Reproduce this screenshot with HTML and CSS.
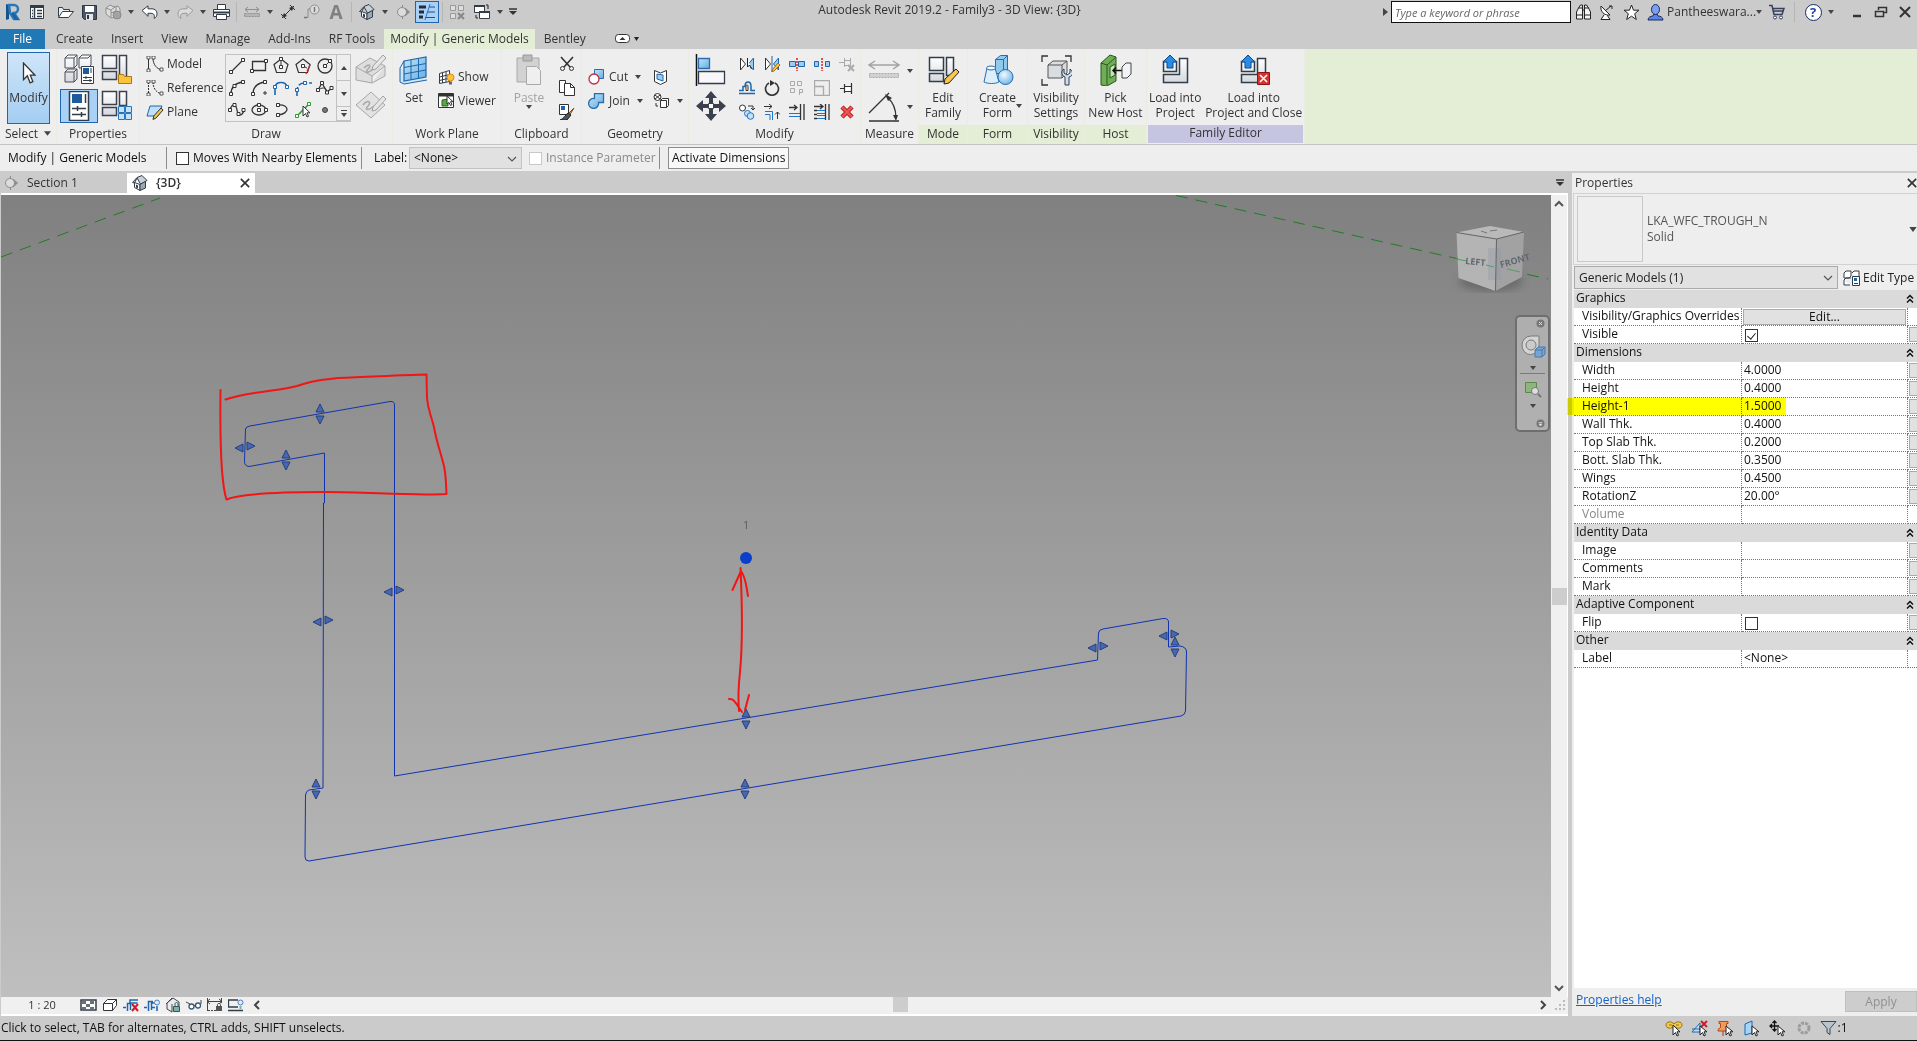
FILE: index.html
```html
<!DOCTYPE html>
<html lang="en">
<head>
    <meta charset="UTF-8">
    <meta name="viewport" content="width=device-width, initial-scale=1.0">
    <title>Autodesk Revit 2019.2 - Family3 - 3D View: {3D}</title>
    <link rel="stylesheet" href="styles.css">
</head>
<body>

    <!-- Shared symbols -->
    <svg class="defs" width="0" height="0" aria-hidden="true">
        <defs>
            <linearGradient id="gWhite" x1="0" y1="0" x2="0" y2="1"><stop offset="0" stop-color="#fff"/><stop offset="1" stop-color="#d4d8de"/></linearGradient>
            <linearGradient id="gBlue" x1="0" y1="0" x2="1" y2="1"><stop offset="0" stop-color="#c4e4f8"/><stop offset="1" stop-color="#62aee2"/></linearGradient>
            <radialGradient id="gBall" cx="0.4" cy="0.35" r="0.7"><stop offset="0" stop-color="#f2faff"/><stop offset="1" stop-color="#6cb4e4"/></radialGradient>
            <symbol id="caret" viewBox="0 0 6 4"><path d="M0 0h6L3 4z" fill="#444"/></symbol>
            <symbol id="cursor" viewBox="0 0 12 20"><path d="M1 1v15l3.500-3.500L7 19l2.500-1.200L7.200 12H11.500z" fill="#fff" stroke="#333" stroke-width="1.200"/></symbol>
            <symbol id="house" viewBox="0 0 16 16"><path d="M2.500 7.500v5L8 15.500v-6z" fill="#fff" stroke="#333d4a"/><path d="M8 15.500l5.500-2.500V6L8 9.500z" fill="#9aa7b5" stroke="#333d4a"/><path d="M.5 7.500L5 2.500l5-2 5 5L8.500 9 5 3 2.500 8z" fill="#c9d0d8" stroke="#333d4a"/><path d="M4 9.500l2 1v3l-2-1z" fill="#333d4a"/></symbol>
            <symbol id="section" viewBox="0 0 16 16"><path d="M7.500 1v14M10 4l4.500 4L10 12z" stroke="#8c8c8c" fill="#8c8c8c"/><circle cx="7" cy="8" r="4.500" fill="#dcdcdc" stroke="#8c8c8c"/></symbol>
            <symbol id="fold" viewBox="0 0 8 10"><path d="M1 4.500l3-3 3 3M1 8.500l3-3 3 3" fill="none" stroke="#111" stroke-width="1.500"/></symbol>
            <symbol id="chev" viewBox="0 0 10 6"><path d="M1 1l4 4 4-4" fill="none" stroke="#555" stroke-width="1.200"/></symbol>
            <symbol id="cross" viewBox="0 0 12 12"><path d="M1 1l10 10M11 1L1 11" stroke="#333" stroke-width="2"/></symbol>
        </defs>
    </svg>

    <!-- Title bar -->
    <header class="titlebar">
        <div class="quick-access">
            <button class="icon-btn" aria-label="Application menu"><svg width="16" height="18" viewBox="0 0 16 18"><path d="M1 1l3 1v14l-3 1z" fill="#14528a"/><path d="M4 2h5a4 4 0 0 1 0 8l4 6h-4L5 10z" fill="none" stroke="#2877b8" stroke-width="2.500"/><path d="M9 10l5 7h-4L6 10z" fill="#1b62a3"/></svg></button>
            <button class="icon-btn" aria-label="Home"><svg width="16" height="16"><path d="M1.500 1.500h13v13h-13z" fill="#fff" stroke="#333d4a"/><path d="M1 1h14v3H1z" fill="#333d4a"/><path d="M5.500 4v11M3 6.500h1M3 9.500h1M3 12.500h1M8 6.500h5M8 9.500h5M8 12.500h5" stroke="#333d4a" stroke-width="1.500"/></svg></button>
            <button class="icon-btn spaced" aria-label="Open"><svg width="17" height="14"><path d="M1.500 11.500v-9h4l1 2h6v2" fill="#e9eef3" stroke="#333d4a"/><path d="M1.500 12.500l4-6h11l-5 6z" fill="#fff" stroke="#333d4a"/></svg></button>
            <button class="icon-btn" aria-label="Save"><svg width="15" height="15"><path d="M.5.500h14v14H2.500l-2-2z" fill="#4b5566" stroke="#2d3542"/><path d="M3 1h9v6H3z" fill="#fff"/><path d="M4 9h7v6H4z" fill="#dfe5ec"/><path d="M5 10h2v4H5z" fill="#2d3542"/></svg></button>
            <button class="icon-btn" aria-label="Synchronize"><svg width="17" height="16"><path d="M1 4l4-3 4 2 4-1 2 3v5l-4 3-5 1-5-4z" fill="#dedede" stroke="#8d8d8d"/><path d="M1 4l5 2 4-3M6 6v7M6 9l5-2V3" fill="none" stroke="#8d8d8d"/><circle cx="12" cy="11" r="4" fill="#a3a3a3" stroke="#8a8a8a"/></svg></button>
            <button class="caret-btn" aria-label="Synchronize options"><svg width="6" height="4"><use href="#caret"/></svg></button>
            <button class="icon-btn" aria-label="Undo"><svg width="17" height="14"><path d="M1 5.500L7 .800v3h4c3 0 5 2 5 5 0 2-1 4-3 4.500 1-3 0-5-3-5H7v3z" fill="#fff" stroke="#333d4a"/></svg></button>
            <button class="caret-btn" aria-label="Undo list"><svg width="6" height="4"><use href="#caret"/></svg></button>
            <button class="icon-btn" aria-label="Redo"><svg width="17" height="14"><path d="M16 5.500L10 .800v3H6c-3 0-5 2-5 5 0 2 1 4 3 4.500-1-3 0-5 3-5h3v3z" fill="#dcdcdc" stroke="#999"/></svg></button>
            <button class="caret-btn" aria-label="Redo list"><svg width="6" height="4"><use href="#caret"/></svg></button>
            <button class="icon-btn" aria-label="Print"><svg width="17" height="16"><path d="M4.500 6V.500h8V6" fill="#fff" stroke="#333d4a"/><path d="M.5 5.500h16v7H.5z" fill="#fff" stroke="#333d4a"/><path d="M1 8.500h15" stroke="#333d4a" stroke-width="2"/><path d="M3.500 10.500h10v5h-10z" fill="#fff" stroke="#333d4a"/></svg></button>
            <span class="divider"></span>
            <button class="icon-btn" aria-label="Measure"><svg width="16" height="12"><path d="M1 3.500h14M4 1L1 3.500 4 6M12 1l3 2.500L12 6" fill="none" stroke="#8d8d8d"/><path d="M.5 7.500h15v3H.5z" fill="#b5b5b5" stroke="#909090" stroke-dasharray="2 1"/></svg></button>
            <button class="caret-btn" aria-label="Measure options"><svg width="6" height="4"><use href="#caret"/></svg></button>
            <button class="icon-btn" aria-label="Aligned dimension"><svg width="16" height="16"><path d="M2 14L14 2M10 1l5 5M1 10l5 5" stroke="#333" fill="none"/><path d="M14 2l-5 2 3 3zM2 14l5-2-3-3z" fill="#333"/></svg></button>
            <button class="icon-btn" aria-label="Tag by category"><svg width="16" height="16"><path d="M1 13.500h3V5h3" fill="none" stroke="#8d8d8d"/><circle cx="10.500" cy="5.500" r="4.500" fill="#dcdcdc" stroke="#8d8d8d"/><path d="M10.500 3v5M0 13.500h3" stroke="#777" stroke-width="1.500"/></svg></button>
            <button class="icon-btn text-tool" aria-label="Text">A</button>
            <span class="divider"></span>
            <button class="icon-btn" aria-label="Default 3D view"><svg width="16" height="16"><use href="#house"/></svg></button>
            <button class="caret-btn" aria-label="3D view options"><svg width="6" height="4"><use href="#caret"/></svg></button>
            <button class="icon-btn" aria-label="Section"><svg width="16" height="16"><use href="#section"/></svg></button>
            <button class="icon-btn pressed" aria-label="Thin lines"><svg width="18" height="16"><path d="M1 3h7M1 8h5M1 13h4" stroke="#222b3a" stroke-width="3"/><path d="M11 3h6M9 8h8M7 13.500h10" stroke="#2a4a80"/><path d="M12 0L7 16" stroke="#2a74c4"/></svg></button>
            <span class="divider"></span>
            <button class="icon-btn" aria-label="Close hidden windows"><svg width="16" height="16"><path d="M.5 1.500h5v5h-5zM8.500 1.500h5v5h-5zM.5 9.500h5v5h-5z" fill="#dedede" stroke="#999"/><path d="M8 9l6 6M14 9l-6 6" stroke="#888" stroke-width="2"/></svg></button>
            <button class="icon-btn" aria-label="Switch windows"><svg width="18" height="18"><path d="M1.500 2.500h10v7h-10zM6.500 8.500h10v7h-10z" fill="#fff" stroke="#333d4a"/><path d="M1 3h11M6 9h11" stroke="#333d4a" stroke-width="2"/><path d="M13 2h2v4M3 12v3h2" fill="none" stroke="#222"/></svg></button>
            <button class="caret-btn" aria-label="Window list"><svg width="6" height="4"><use href="#caret"/></svg></button>
            <button class="caret-btn customize" aria-label="Customize toolbar"><svg width="8" height="8"><path d="M0 1h8" stroke="#333" stroke-width="1.500"/><path d="M0 3h8L4 7z" fill="#333"/></svg></button>
        </div>

        <h1 class="window-title">Autodesk Revit 2019.2 - Family3 - 3D View: {3D}</h1>

        <div class="info-center">
            <button class="caret-btn" aria-label="Collapse search"><svg width="5" height="8"><path d="M0 0v8l5-4z" fill="#444"/></svg></button>
            <input class="search" type="text" placeholder="Type a keyword or phrase" aria-label="Search help">
            <button class="icon-btn" aria-label="Search"><svg width="17" height="17"><path d="M3.500 4l2-3h2v8M13.500 4l-2-3h-2v8" fill="#e8e8e8" stroke="#222"/><path d="M1.500 8l2-4h4v11h-6zM15.500 8l-2-4h-4v11h6z" fill="#f4f4f4" stroke="#222"/><path d="M7 6h3M1 11h6M10 11h6" stroke="#222"/></svg></button>
            <button class="icon-btn" aria-label="Communication center"><svg width="16" height="17"><path d="M2 2c-1 5 3 10 9 9z" fill="#fff" stroke="#222"/><path d="M6 7l6-5M10 2h3v3" stroke="#222" fill="none"/><path d="M5 11l-3 4.500h9L8 11" fill="#fff" stroke="#222"/></svg></button>
            <button class="icon-btn" aria-label="Favorites"><svg width="17" height="17"><path d="M8.500 1l2 5.200h5.500l-4.300 3.500 1.600 5.800-4.800-3.300-4.800 3.300 1.600-5.800L1 6.200h5.500z" fill="#fff" stroke="#222"/></svg></button>
            <button class="icon-btn" aria-label="Account"><svg width="17" height="17"><path d="M1 16c0-3 3-4 5-4l1-2h3l1 2c2 0 5 1 5 4z" fill="#5b84e8" stroke="#1b2c5c"/><ellipse cx="8.500" cy="5.500" rx="4" ry="5" fill="#7ca0f4" stroke="#1b2c5c"/></svg></button>
            <button class="user-btn">Pantheeswara... <svg width="6" height="4"><use href="#caret"/></svg></button>
            <button class="icon-btn" aria-label="App store"><svg width="17" height="16"><path d="M1 1.500h3l2 9h8l2-6H5M5 7h10" fill="none" stroke="#34405c" stroke-width="1.500"/><circle cx="7" cy="13.500" r="1.500" fill="#fff" stroke="#34405c"/><circle cx="13" cy="13.500" r="1.500" fill="#fff" stroke="#34405c"/></svg></button>
            <span class="divider"></span>
            <button class="icon-btn" aria-label="Help"><span class="help-mark">?</span></button>
            <button class="caret-btn" aria-label="Help options"><svg width="6" height="4"><use href="#caret"/></svg></button>
            <div class="window-buttons">
                <button class="icon-btn" aria-label="Minimize"><svg width="12" height="12"><path d="M2 10h8" stroke="#333" stroke-width="2.500"/></svg></button>
                <button class="icon-btn" aria-label="Restore"><svg width="14" height="12"><path d="M4.500 4V1.500h8v5H10M1.500 5.500h8v5h-8z" fill="none" stroke="#333" stroke-width="1.500"/></svg></button>
                <button class="icon-btn" aria-label="Close"><svg width="12" height="12"><use href="#cross"/></svg></button>
            </div>
        </div>
    </header>

    <!-- Ribbon tabs -->
    <nav class="tabs">
        <button class="tab file">File</button>
        <button class="tab">Create</button>
        <button class="tab">Insert</button>
        <button class="tab">View</button>
        <button class="tab">Manage</button>
        <button class="tab">Add-Ins</button>
        <button class="tab">RF Tools</button>
        <button class="tab active">Modify | Generic Models</button>
        <button class="tab">Bentley</button>
        <button class="tab cycle" aria-label="Minimize ribbon"><svg width="24" height="10"><rect x=".5" y=".5" width="14" height="8" rx="3" fill="#fff" stroke="#333"/><path d="M4.500 6h6l-3-3z" fill="#333"/><path d="M19 3h5l-2.500 4z" fill="#222"/></svg></button>
    </nav>

    <!-- Ribbon -->
    <section class="ribbon">
        <div class="panel w-select">
            <div class="panel-body">
                <button class="big-btn modify-btn"><svg width="14" height="22"><use href="#cursor"/></svg><span>Modify</span></button>
            </div>
            <div class="panel-title">Select <svg width="7" height="5"><use href="#caret"/></svg></div>
        </div>

        <div class="panel w-properties">
            <div class="panel-body prop-grid">
                <button class="tool" aria-label="Type properties"><svg width="32" height="32" viewBox="0 0 32 32"><g fill="url(#gWhite)" stroke="#4a4f58"><path d="M2 4l3-3h9v10l-3 3H2zM16 4l3-3h9v10l-3 3h-9zM2 18l3-3h9v10l-3 3H2z"/><path d="M2 4h9v10M11 4l3-3M16 4h9M25 4l3-3M2 18h9v10M11 18l3-3" fill="none"/></g><path d="M18.500 12.500h12v17h-12z" fill="#fff" stroke="#333d4a"/><path d="M20 14h6v6h-6z" fill="#1d5b9e"/><path d="M28 14v5M20 23.500h9M20 26.500h9M23 22v3M27 25v3" stroke="#333d4a"/></svg></button>
                <button class="tool" aria-label="Family category"><svg width="32" height="32" viewBox="0 0 32 32"><path d="M1.500 1.500h14v13h-14zM18.500 1.500h7v23h-7zM1.500 17.500h14v8h-14z" fill="url(#gWhite)" stroke="#3c424d" stroke-width="1.500"/><path d="M17.500 20.500h5l1 2h7v7h-13z" fill="#fbc33c" stroke="#b07812"/></svg></button>
                <button class="tool on" aria-label="Properties"><svg width="22" height="30" viewBox="0 0 22 30"><path d="M1.500.500h19v29h-19z" fill="#fff" stroke="#333d4a" stroke-width="1.500"/><path d="M4 3h10v9H4z" fill="#1d5b9e"/><path d="M17.500 3v9M4 17.500h14M4 23.500h14M9.500 15v5M13.500 21v5" stroke="#333d4a" stroke-width="1.500"/></svg></button>
                <button class="tool" aria-label="Family types"><svg width="32" height="32" viewBox="0 0 32 32"><path d="M1.500 1.500h14v13h-14zM18.500 1.500h7v14h-7zM1.500 17.500h14v8h-14z" fill="url(#gWhite)" stroke="#3c424d" stroke-width="1.500"/><path d="M17.500 16.500h6v6h-6zM24.500 16.500h6v6h-6zM17.500 23.500h6v6h-6zM24.500 23.500h6v6h-6z" fill="#c4e2f8" stroke="#2a74b8"/></svg></button>
            </div>
            <div class="panel-title">Properties</div>
        </div>

        <div class="panel w-draw">
            <div class="panel-body">
                <div class="tool-list">
                    <button class="row-btn"><svg width="18" height="16"><path d="M2.500 2v12M7 2c0 7 4 11 9 12" fill="none" stroke="#333"/><path d="M1 0h3v3H1zM1 13h3v3H1zM6 0h3v3H6zM14 12h3v3h-3z" fill="#fff" stroke="#333" stroke-width=".8"/></svg>Model</button>
                    <button class="row-btn"><svg width="18" height="16"><path d="M2.500 2v12M7 2c0 7 4 11 9 12" fill="none" stroke="#333" stroke-dasharray="2 1"/><path d="M1 0h3v3H1zM1 13h3v3H1zM6 0h3v3H6zM14 12h3v3h-3z" fill="#fff" stroke="#333" stroke-width=".8"/></svg>Reference</button>
                    <button class="row-btn"><svg width="18" height="16"><path d="M4 2h12l-4 10H1z" fill="#bfe0f8" stroke="#1d66ac"/><path d="M15 4l2 2-7 8-3 1.500.800-3.500z" fill="#f9c54a" stroke="#333"/></svg>Plane</button>
                </div>
                <div class="draw-box">
                    <div class="draw-grid">
                        <button class="tool" aria-label="Line"><svg width="18" height="18"><path d="M3 15L15 3" stroke="#333" stroke-width="1.300"/><path d="M1.500 13.500h3v3h-3zM13.500 1.500h3v3h-3z" fill="#fff" stroke="#333"/></svg></button>
                        <button class="tool" aria-label="Rectangle"><svg width="18" height="18"><path d="M2.500 4.500h13v9h-13z" fill="none" stroke="#333" stroke-width="1.300"/><path d="M.5 12.500h3v3h-3zM14.500 2.500h3v3h-3z" fill="#fff" stroke="#333"/></svg></button>
                        <button class="tool" aria-label="Inscribed polygon"><svg width="18" height="18"><path d="M9 2l7 5.500-2.500 8h-9L2 7.500z" fill="none" stroke="#333" stroke-width="1.200"/><path d="M9 3v6" stroke="#333"/><path d="M7.500.500h3v3h-3zM7.500 8.500h3v3h-3z" fill="#fff" stroke="#333"/></svg></button>
                        <button class="tool" aria-label="Circumscribed polygon"><svg width="18" height="18"><path d="M9 2l7 5.500-2.500 8h-9L2 7.500z" fill="none" stroke="#333" stroke-width="1.200"/><path d="M9 9l4 2" stroke="#333"/><path d="M16 8l-4 9" stroke="#d22" stroke-width="1.500" stroke-dasharray="3 1"/><path d="M7.500 7.500h3v3h-3z" fill="#fff" stroke="#333"/></svg></button>
                        <button class="tool" aria-label="Circle"><svg width="18" height="18"><circle cx="9" cy="9" r="7" fill="none" stroke="#333" stroke-width="1.300"/><path d="M9 9l5-5" stroke="#333"/><path d="M7.500 7.500h3v3h-3zM12.500 2.500h3v3h-3z" fill="#fff" stroke="#333"/></svg></button>
                        <button class="tool" aria-label="Start-end-radius arc"><svg width="18" height="18"><path d="M3 15C3 8 8 4 15 3" fill="none" stroke="#333" stroke-width="1.300"/><path d="M1.500 13.500h3v3h-3zM13.500 1.500h3v3h-3zM5 5.500h3v3H5z" fill="#fff" stroke="#333"/></svg></button>
                        <button class="tool" aria-label="Center-ends arc"><svg width="18" height="18"><path d="M3 15C3 8 8 4 15 3" fill="none" stroke="#333" stroke-width="1.300"/><path d="M1.500 13.500h3v3h-3zM13.500 1.500h3v3h-3z" fill="#fff" stroke="#333"/><path d="M13 14h4M15 12v4" stroke="#333"/></svg></button>
                        <button class="tool" aria-label="Tangent arc"><svg width="18" height="18"><path d="M3 16V8c1-6 11-6 12 0" fill="none" stroke="#1c66b4" stroke-width="1.600"/><path d="M1.500 6.500h3v3h-3zM13.500 6.500h3v3h-3z" fill="#fff" stroke="#1c66b4"/></svg></button>
                        <button class="tool" aria-label="Fillet arc"><svg width="18" height="18"><path d="M3 17v-5c0-5 3-8 7-8h8" fill="none" stroke="#1c66b4" stroke-width="1.600" stroke-dasharray="9 2"/><path d="M1.500 9.500h3v3h-3zM9.500 2.500h3v3h-3z" fill="#fff" stroke="#1c66b4"/></svg></button>
                        <button class="tool" aria-label="Spline"><svg width="18" height="18"><path d="M2 11L6 4l5 9 5-4" fill="none" stroke="#333" stroke-width="1.300"/><path d="M2 11c3-2 8-4 9 2" fill="none" stroke="#333"/><path d="M.5 9.500h3v3h-3zM4.500 2.500h3v3h-3zM9.500 12h3v3h-3zM14 7.500h3v3h-3z" fill="#fff" stroke="#333"/></svg></button>
                        <button class="tool" aria-label="Spline through points"><svg width="18" height="18"><path d="M2 9c2-7 6-6 7 0s5 7 7 0" fill="none" stroke="#333" stroke-width="1.300"/><path d="M.5 7.500h3v3h-3zM5 2.500h3v3H5zM9 11.500h3v3H9zM14 7.500h3v3h-3z" fill="#fff" stroke="#333"/></svg></button>
                        <button class="tool" aria-label="Ellipse"><svg width="18" height="18"><ellipse cx="9" cy="9" rx="7" ry="5" fill="none" stroke="#333" stroke-width="1.300"/><path d="M7.500 7.500h3v3h-3zM14.500 7.500h3v3h-3zM7.500 2.500h3v3h-3z" fill="#fff" stroke="#333"/></svg></button>
                        <button class="tool" aria-label="Partial ellipse"><svg width="18" height="18"><path d="M6 4c12-1 12 9 0 10" fill="none" stroke="#333" stroke-width="1.300"/><path d="M4.500 2.500h3v3h-3zM4.500 12.500h3v3h-3z" fill="#fff" stroke="#333"/></svg></button>
                        <button class="tool" aria-label="Pick lines"><svg width="18" height="18"><path d="M3 15L15 3" stroke="#2f9a2f" stroke-width="1.600"/><path d="M1.500 13.500h3v3h-3zM13.500 1.500h3v3h-3z" fill="#fff" stroke="#2f9a2f"/><path d="M9 5v10l2.500-2.500L13 16l1.500-.700-1.500-3.500h3z" fill="#fff" stroke="#333"/></svg></button>
                        <button class="tool" aria-label="Point"><svg width="18" height="18"><circle cx="9" cy="9" r="2.500" fill="#777" stroke="#444"/></svg></button>
                    </div>
                    <div class="draw-scroll">
                        <button aria-label="Scroll up"><svg width="6" height="4"><path d="M0 4h6L3 0z" fill="#444"/></svg></button>
                        <button aria-label="Scroll down"><svg width="6" height="4"><use href="#caret"/></svg></button>
                        <button class="more" aria-label="More"><svg width="6" height="7"><path d="M0 .500h6" stroke="#444"/><path d="M0 3h6L3 7z" fill="#444"/></svg></button>
                    </div>
                </div>
                <div class="surface-tools">
                    <button class="tool" aria-label="Draw on face"><svg width="32" height="32" viewBox="0 0 32 32"><path d="M1 14L15 5l15 8-13 10zM1 14v13l16 3V23M30 13v10L17 30" fill="#dedede" stroke="#a8a8a8"/><path d="M9 15c5-5 8-3 4 1s0 5 6-1" fill="none" stroke="#a8a8a8" stroke-width="1.500"/><path d="M28 2l3 3-10 11-4 1 1-4z" fill="#e6e6e6" stroke="#a0a0a0"/></svg></button>
                    <button class="tool" aria-label="Draw on work plane"><svg width="32" height="32" viewBox="0 0 32 32"><path d="M1 16L16 3l14 13-14 13z" fill="#e2e2e2" stroke="#a8a8a8"/><path d="M8 16c5-6 9-3 5 1s0 5 6 0" fill="none" stroke="#a8a8a8" stroke-width="1.500"/><path d="M28 7l3 3-10 11-4 1 1-4z" fill="#e6e6e6" stroke="#a0a0a0"/></svg></button>
                </div>
            </div>
            <div class="panel-title">Draw</div>
        </div>

        <div class="panel w-workplane">
            <div class="panel-body">
                <button class="big-btn narrow"><svg width="32" height="32" viewBox="0 0 32 32"><path d="M2 14v14l4 2 23-4" fill="#cfe6f6" stroke="#1d66ac"/><path d="M6 7l22-4v20L6 27z" fill="url(#gBlue)" stroke="#1d66ac" stroke-width="1.200"/><path d="M13 6v20M20.500 5v20M6 13.500l22-4M6 20l22-4M2 14l4-7" fill="none" stroke="#1d66ac"/></svg><span>Set</span></button>
                <div class="tool-list middle">
                    <button class="row-btn"><svg width="17" height="16"><path d="M1.500 4.500l10-3v11l-10 2zM4.500 4v10M8 3v10M1.500 8l10-2.500M1.500 11.500l10-2.500" fill="#fff" stroke="#333d4a"/><circle cx="12.500" cy="8.500" r="3.500" fill="#ffc23a" stroke="#d88a12"/><path d="M11 12.500h3v3h-3z" fill="#666"/></svg>Show</button>
                    <button class="row-btn"><svg width="17" height="16"><path d="M.5.500h15v14H.5z" fill="#fff" stroke="#333"/><path d="M1 2h14" stroke="#333" stroke-width="3"/><path d="M4 7l6-1v7H4z" fill="#5aa845" stroke="#28671c"/><path d="M9 3v8l2-1.500 1.500 3 1.500-.800-1.500-3H15z" fill="#fff" stroke="#333"/></svg>Viewer</button>
                </div>
            </div>
            <div class="panel-title">Work Plane</div>
        </div>

        <div class="panel w-clipboard">
            <div class="panel-body">
                <button class="big-btn narrow disabled"><svg width="28" height="32" viewBox="0 0 28 32"><path d="M2 4h22v24H2z" fill="#d2d2d2" stroke="#aaa"/><path d="M8 1h9v6H8z" fill="#bbb" stroke="#999"/><path d="M11.500 12.500h10l4 4v14h-14z" fill="#efefef" stroke="#aaa"/></svg><span>Paste</span><svg width="6" height="4"><use href="#caret"/></svg></button>
                <div class="tool-list">
                    <button class="tool" aria-label="Cut"><svg width="16" height="16"><path d="M2 1l9 10M14 1L5 11" stroke="#333" stroke-width="1.600"/><circle cx="3.500" cy="12.500" r="2" fill="none" stroke="#333"/><circle cx="12.500" cy="12.500" r="2" fill="none" stroke="#333"/></svg></button>
                    <button class="tool" aria-label="Copy"><svg width="16" height="16"><path d="M.5.500h6v12h-6z" fill="#fff" stroke="#333"/><path d="M5.500 3.500h6l4 4v8h-10z" fill="#fff" stroke="#333"/><path d="M11.500 3.500v4h4" fill="none" stroke="#333"/></svg></button>
                    <button class="tool" aria-label="Match type"><svg width="16" height="16"><path d="M.5.500h9v10h-9z" fill="#fff" stroke="#333"/><path d="M2 2h4v4H2z" fill="#1d66ac"/><path d="M15 4l-6 6 1 2z" fill="#e8b060" stroke="#7a4a12"/><path d="M9 9l3 2-4 5H1c4-1 5-5 8-7z" fill="#4a5566" stroke="#222"/></svg></button>
                </div>
            </div>
            <div class="panel-title">Clipboard</div>
        </div>

        <div class="panel w-geometry">
            <div class="panel-body">
                <div class="tool-list middle">
                    <button class="row-btn"><svg width="18" height="16"><path d="M6.500.500h9v9h-9z" fill="url(#gBlue)" stroke="#2a6cad"/><circle cx="6" cy="10" r="5" fill="#fff" stroke="#c22c42" stroke-width="1.300"/></svg>Cut <svg class="more-caret" width="6" height="4"><use href="#caret"/></svg></button>
                    <button class="row-btn"><svg width="18" height="16"><path d="M6.500.500h9v9h-5a5 5 0 1 1-4-4z" fill="url(#gBlue)" stroke="#2a6cad" stroke-width="1.300"/></svg>Join <svg class="more-caret" width="6" height="4"><use href="#caret"/></svg></button>
                </div>
                <div class="tool-list middle">
                    <button class="tool" aria-label="Split face"><svg width="16" height="16"><path d="M1.500 1.500l6 2.500 6-2.500v11l-6 3-6-3z" fill="#fff" stroke="#333"/><path d="M4 5l6 1v6l-6-2z" fill="#9ccdf0" stroke="#1d66ac"/></svg></button>
                    <button class="tool pair" aria-label="Paint"><svg width="17" height="16"><circle cx="4.500" cy="4" r="3.500" fill="#fff" stroke="#333"/><path d="M2 2l5 4M7 2L2 6M3 10v3h2" stroke="#333" fill="none"/><path d="M7.500 7.500l2-2h6v7l-2 2h-6zM7.500 7.500h6v7" fill="#fff" stroke="#333"/></svg><svg width="6" height="4"><use href="#caret"/></svg></button>
                </div>
            </div>
            <div class="panel-title">Geometry</div>
        </div>

        <div class="panel w-modify">
            <div class="panel-body">
                <div class="tool-stack">
                    <button class="tool" aria-label="Align"><svg width="32" height="32" viewBox="0 0 32 32"><path d="M1.500 0v32" stroke="#111" stroke-width="1.500"/><path d="M3.500 4.500h11v10h-11z" fill="url(#gBlue)" stroke="#2a6cad" stroke-width="1.300"/><path d="M3.500 17.500h26v12h-26z" fill="#f8f8fa" stroke="#333d4a" stroke-width="1.300"/></svg></button>
                    <button class="tool" aria-label="Move"><svg width="32" height="32" viewBox="0 0 32 32"><path d="M16 1l6 7h-4v5h-4V8h-4zM16 31l6-7h-4v-5h-4v5h-4zM1 16l7-6v4h5v4H8v4zM31 16l-7-6v4h-5v4h5v4z" fill="#3a404c"/><path d="M13.500 13.500h5v5h-5z" fill="#fff" stroke="#3a404c"/></svg></button>
                </div>
                <div class="modify-grid">
                    <button class="tool" aria-label="Mirror pick axis"><svg width="16" height="16"><path d="M1.500 2v12l5-6z" fill="#fff" stroke="#333"/><path d="M14.500 2v12l-5-6z" fill="#9ccdf0" stroke="#1d66ac"/><path d="M8.500 2v9l2-2 2 4" stroke="#222" fill="#fff"/></svg></button>
                    <button class="tool" aria-label="Mirror draw axis"><svg width="16" height="16"><path d="M1.500 2v12l5-6z" fill="#fff" stroke="#333"/><path d="M14.500 2v12l-5-6z" fill="#9ccdf0" stroke="#1d66ac"/><path d="M8 0v16" stroke="#1d66ac"/><path d="M14 7l2 2-6 6-2 .500.500-2z" fill="#f9c54a" stroke="#a06a12"/></svg></button>
                    <button class="tool" aria-label="Split"><svg width="16" height="16"><path d="M.5 5.500h6v5h-6zM9.500 5.500h6v5h-6z" fill="#9ccdf0" stroke="#1d66ac"/><path d="M8 2v13" stroke="#d22" stroke-width="1.500" stroke-dasharray="2 1"/></svg></button>
                    <button class="tool" aria-label="Split with gap"><svg width="16" height="16"><path d="M.5 5.500h4v5h-4zM11.500 5.500h4v5h-4z" fill="#9ccdf0" stroke="#1d66ac"/><path d="M8 2v13" stroke="#d22" stroke-width="1.500" stroke-dasharray="2 1"/></svg></button>
                    <button class="tool" aria-label="Unpin"><svg width="16" height="16"><path d="M0 6.500h5M5.500 2v9M5.500 4.500h6v5h-6M11.500 2v9" fill="none" stroke="#aaa"/><path d="M9 9l6 6M15 9l-6 6" stroke="#aaa" stroke-width="2"/></svg></button>
                    <button class="tool" aria-label="Offset"><svg width="16" height="16"><path d="M0 13.500h16M0 10.500h4v-4h2c0-6 6-6 6 0v4h4" fill="none" stroke="#1d66ac" stroke-width="1.500"/><path d="M7 10.500V7c0-3 2-3 2 0v3.500z" fill="#fff" stroke="#333"/></svg></button>
                    <button class="tool" aria-label="Rotate"><svg width="16" height="16"><path d="M5 3a6.500 6.500 0 1 0 6 0" fill="none" stroke="#333" stroke-width="1.600"/><path d="M6 0l5 3-5 3z" fill="#333"/></svg></button>
                    <button class="tool" aria-label="Array"><svg width="16" height="16"><path d="M1.500 1.500h4v4h-4zM8.500 1.500h4v4h-4zM1.500 8.500h4v4h-4zM10.500 15V9.500h3v3h-3" fill="none" stroke="#aaa"/></svg></button>
                    <button class="tool" aria-label="Scale"><svg width="16" height="16"><path d="M.5.500h15v15H.5zM.5 6.500h9v9" fill="none" stroke="#aaa" stroke-width="1.300"/></svg></button>
                    <button class="tool" aria-label="Pin"><svg width="16" height="16"><path d="M1 8.500h4M5.500 4v9M5.500 6.500h7v5h-7M12.500 3v11" fill="#fff" stroke="#333" stroke-width="1.200"/></svg></button>
                    <button class="tool" aria-label="Copy element"><svg width="16" height="16"><circle cx="3.500" cy="4" r="3" fill="#fff" stroke="#333"/><path d="M9 2h5v4M12 4l2 2 2-2" fill="none" stroke="#333"/><circle cx="8.500" cy="9.500" r="3" fill="#c4e2f8" stroke="#1d76c8"/><circle cx="11.500" cy="12" r="3.300" fill="#c4e2f8" stroke="#1d76c8"/></svg></button>
                    <button class="tool" aria-label="Trim corner"><svg width="16" height="16"><path d="M0 2.500h8M5 0l3 2.500L5 5M13.500 15V8M11 10.500L13.500 8l2.500 2.500" fill="none" stroke="#333"/><path d="M1 7.500h7.500V16M1 10.500h5V16" fill="none" stroke="#1d76c8"/></svg></button>
                    <button class="tool" aria-label="Trim single"><svg width="16" height="16"><path d="M0 3.500h8M5 1l3 2.500L5 6M11.500 0v16M15 0v16" fill="none" stroke="#333" stroke-width="1.300"/><path d="M0 9.500h11M0 12.500h11" stroke="#1d76c8"/></svg></button>
                    <button class="tool" aria-label="Trim multiple"><svg width="16" height="16"><path d="M0 2.500h9M6 0l3 2.500L6 5M11.500 0v16M15 0v16M0 6.500h3M0 10.500h3M0 14.500h3" fill="none" stroke="#333" stroke-width="1.300"/><path d="M3 6.500h8M3 9.500h8M3 11.500h8M3 14.500h8" stroke="#1d76c8"/></svg></button>
                    <button class="tool" aria-label="Delete"><svg width="16" height="16"><path d="M3 3l10 10M13 3L3 13" stroke="#a81c1c" stroke-width="4.500"/><path d="M3 3l10 10M13 3L3 13" stroke="#f05050" stroke-width="2.500"/></svg></button>
                </div>
            </div>
            <div class="panel-title">Modify</div>
        </div>

        <div class="panel w-measure">
            <div class="panel-body tool-stack">
                <button class="tool pair" aria-label="Measure between references"><svg width="32" height="32" viewBox="0 0 32 32"><path d="M1 10h30M7 6l-6 4 6 4M25 6l6 4-6 4" fill="none" stroke="#a3a3a3" stroke-width="1.500"/><path d="M1.500 18.500h29v4h-29z" fill="#d0d0d0" stroke="#aaa" stroke-dasharray="2 1"/></svg><svg width="6" height="4"><use href="#caret"/></svg></button>
                <button class="tool pair" aria-label="Angular dimension"><svg width="32" height="32" viewBox="0 0 32 32"><path d="M1 22L21 2M1 30h30" stroke="#333" stroke-width="1.300"/><path d="M19 6c6 5 9 12 9 21" fill="none" stroke="#333" stroke-width="1.300"/><path d="M17 3l7 4-4 3zM25 24h5l-2 6z" fill="#333"/></svg><svg width="6" height="4"><use href="#caret"/></svg></button>
            </div>
            <div class="panel-title">Measure</div>
        </div>

        <div class="panel context w-mode">
            <div class="panel-body">
                <button class="big-btn"><svg width="32" height="32" viewBox="0 0 32 32"><path d="M2.500 3.500h14v13h-14zM19.500 3.500h7v18h-7zM2.500 19.500h14v8h-14z" fill="url(#gWhite)" stroke="#333d4a" stroke-width="1.500"/><path d="M29 15l3 3-10 11-5 1 1-5z" fill="#f9c54a" stroke="#222"/></svg><span>Edit<br>Family</span></button>
            </div>
            <div class="panel-title">Mode</div>
        </div>

        <div class="panel context w-form">
            <div class="panel-body">
                <button class="big-btn"><svg width="32" height="32" viewBox="0 0 32 32"><path d="M13.500 5.500l5-4h7v15l-4 3h-8zM13.500 5.500h8v13M21.500 5.500l4-4" fill="#8fc9ee" stroke="#2a6cad"/><path d="M5 14h8l4 14c-4 2-11 2-15 0z" fill="#dceefa" stroke="#2a6cad"/><ellipse cx="9" cy="14" rx="4.500" ry="2" fill="#f5fbff" stroke="#2a6cad"/><circle cx="23.500" cy="23" r="7.500" fill="url(#gBall)" stroke="#2a6cad"/></svg><span>Create<br>Form</span><svg class="corner" width="6" height="4"><use href="#caret"/></svg></button>
            </div>
            <div class="panel-title">Form</div>
        </div>

        <div class="panel context w-visibility">
            <div class="panel-body">
                <button class="big-btn"><svg width="32" height="32" viewBox="0 0 32 32"><path d="M2 8V2h6M25 2h6v6M2 25v6h6" fill="none" stroke="#333" stroke-width="1.300"/><path d="M8 11l5-4h14v12l-5 5H8zM8 11h14v13M22 11l5-4" fill="#d9dce1" stroke="#555"/><path d="M24 15v4l3 2 3-2v-4c4 3 3 7-1 8v8h-4v-8c-4-2-4-6-1-8z" fill="#cfe0f2" stroke="#333d4a"/></svg><span>Visibility<br>Settings</span></button>
            </div>
            <div class="panel-title">Visibility</div>
        </div>

        <div class="panel context w-host">
            <div class="panel-body">
                <button class="big-btn"><svg width="32" height="32" viewBox="0 0 32 32"><path d="M1 9l9-8 6 2v24l-9 5-6-1z" fill="#6fae57" stroke="#28591b"/><path d="M7 11v20M7 11l9-8M1 9l6 2" stroke="#28591b" fill="none"/><path d="M10 13l5-3v11l-5 3z" fill="#c9e4bd" stroke="#28591b"/><path d="M13 16.500h9M16 13.500l-3 3 3 3" stroke="#111" stroke-width="1.500" fill="none"/><path d="M22 13l4-4h5v11l-4 4h-5z" fill="#f1f3f6" stroke="#444"/></svg><span>Pick<br>New Host</span></button>
            </div>
            <div class="panel-title">Host</div>
        </div>

        <div class="panel family w-family">
            <div class="panel-body">
                <button class="big-btn"><svg width="32" height="32" viewBox="0 0 32 32"><path d="M4.500 7.500h13v10h-13zM20.500 4.500h8v24h-24v-8h16z" fill="url(#gWhite)" stroke="#333d4a" stroke-width="1.500"/><path d="M11 1l7 7h-4v6H8V8H4z" fill="#2b8ce6" stroke="#0d4a8c"/></svg><span>Load into<br>Project</span></button>
                <button class="big-btn"><svg width="32" height="32" viewBox="0 0 32 32"><path d="M3.500 7.500h13v10h-13zM19.500 4.500h8v24h-24v-8h16z" fill="url(#gWhite)" stroke="#333d4a" stroke-width="1.500"/><path d="M10 1l7 7h-4v6H7V8H3z" fill="#2b8ce6" stroke="#0d4a8c"/><path d="M19.500 18.500h12v12h-12z" fill="#d9322e" stroke="#8c1414"/><path d="M22 21l7 7M29 21l-7 7" stroke="#fff" stroke-width="1.500"/></svg><span>Load into<br>Project and Close</span></button>
            </div>
            <div class="panel-title">Family Editor</div>
        </div>
    </section>

    <!-- Options bar -->
    <section class="options-bar">
        <span class="mode-name">Modify | Generic Models</span>
        <span class="bar"></span>
        <label class="check"><input type="checkbox">Moves With Nearby Elements</label>
        <span class="bar"></span>
        <label class="label-field" for="labelSelect">Label:</label>
        <div class="select-wrap label-select">
            <select id="labelSelect"><option>&lt;None&gt;</option></select>
            <svg width="10" height="6"><use href="#chev"/></svg>
        </div>
        <label class="check off"><input type="checkbox" disabled>Instance Parameter</label>
        <span class="bar"></span>
        <button class="activate">Activate Dimensions</button>
    </section>

    <main class="workspace">
        <!-- Drawing area -->
        <section class="view">
            <div class="view-tabs">
                <button class="view-tab"><svg width="16" height="16"><use href="#section"/></svg>Section 1</button>
                <div class="view-tab current"><svg width="16" height="16"><use href="#house"/></svg><b>{3D}</b><button class="close-tab" aria-label="Close view"><svg width="10" height="10" viewBox="0 0 12 12"><use href="#cross"/></svg></button></div>
                <button class="view-menu" aria-label="View list"><svg width="8" height="8"><path d="M0 1h8" stroke="#333" stroke-width="1.500"/><path d="M0 3h8L4 7z" fill="#333"/></svg></button>
            </div>

            <div class="view-row">
                <div class="canvas">
                    <svg class="model" viewBox="1 195 1550 802" preserveAspectRatio="xMinYMin meet">
                        <defs>
                            <path id="gripV" d="M0-10l4 8h-8zM0 10l4-8h-8z"/>
                            <path id="gripH" d="M-10 1l8-4v8zM10-1l-8-4v8z"/>
                            <filter id="soft"><feGaussianBlur stdDeviation="4"/></filter>
                        </defs>

                        <!-- Reference planes -->
                        <g class="ref-plane">
                            <path d="M1 257L160 198"/>
                            <path d="M1176 195.500L1548 279"/>
                        </g>

                        <!-- Profile sketch -->
                        <path class="profile" d="M324.500 453L249 466.500Q244.500 466 244.500 461.500L245.500 429Q246 426.500 250 426L390 401.500Q394.500 401 394.500 405V776L1097.500 660L1098.500 633Q1099 629.500 1103 629L1163 618.500Q1168.500 618 1168.500 622V647L1180 646Q1186.500 647 1186.500 652L1185.500 711Q1185 715 1181 716L309 861Q305 861 305 857L305.500 795Q306 791 309 790L323 788L323.500 503H324.500Z"/>
                        <g class="grips">
                            <use href="#gripV" x="320" y="414"/><use href="#gripV" x="286" y="460"/>
                            <use href="#gripV" x="746" y="719"/><use href="#gripV" x="745" y="789"/>
                            <use href="#gripV" x="1175" y="647"/><use href="#gripV" x="316" y="789"/>
                            <use href="#gripH" x="245" y="447"/><use href="#gripH" x="394" y="591"/>
                            <use href="#gripH" x="323" y="621"/><use href="#gripH" x="1098" y="647"/>
                            <use href="#gripH" x="1169" y="635"/>
                        </g>
                        <circle cx="746" cy="558" r="6" fill="#0a3ecb"/>
                        <text class="point-label" x="746" y="529">1</text>

                        <!-- Hand markup -->
                        <g class="markup">
                            <path d="M220.500 390C220 430 220 480 226.500 499.500C240 494 280 492 325 492C370 492 410 496 446.500 494C446 485 446 475 444 466C440 450 436 440 434 427C430 412 428 410 427 398L426.500 374.500C400 375 370 377 338 378C310 381 306 383 297 386C280 391 250 391 225.500 399.500"/>
                            <path d="M740.500 568C742 600 743 640 740 672C738 690 738 700 739 711M732.500 590L741 571C746 578 746 585 748 596M729 699C734 698 736 704 742 712M749 695L745 710"/>
                        </g>

                        <!-- View cube -->
                        <ellipse cx="1491" cy="281" rx="32" ry="10" fill="#444" opacity=".45" filter="url(#soft)"/>
                        <path d="M1456.500 232.500L1496.500 239L1495.500 291L1458.500 278Z" fill="#b4b4b4"/>
                        <path d="M1496.500 239L1524 232L1522 277L1495.500 291Z" fill="#a2a2a2"/>
                        <path d="M1456.500 232.500L1490 226L1524 232L1496.500 239Z" fill="#b9b9b9"/>
                        <path d="M1488 248h13v32h-13z" fill="#8f9aa6" opacity=".35"/>
                        <path d="M1456.500 232.500L1496.500 239L1524 232M1496.500 239L1495.500 291" fill="none" stroke="#666"/>
                        <path d="M1481 231l6 2M1490 231l7-1" stroke="#777"/>
                        <path d="M1456 259L1467 261M1486 265L1494 267M1507 269L1520 272" stroke="#4fa05c"/>
                        <text class="cube-label" x="1465" y="264" transform="rotate(6 1465 264)">LEFT</text>
                        <text class="cube-label" x="1501" y="268" transform="rotate(-16 1501 268)">FRONT</text>
                    </svg>

                    <div class="nav-bar">
                        <button class="nav-dot" aria-label="Close navigation bar"><svg width="9" height="9"><circle cx="4.500" cy="4.500" r="4" fill="#777"/><path d="M3 3l3 3M6 3L3 6" stroke="#ddd"/></svg></button>
                        <button class="nav-tool" aria-label="Steering wheel"><svg width="26" height="26"><path d="M2 11a9 9 0 0 1 9-9h8v9a8 9 0 0 1-17 0z" fill="#d4d4d4" stroke="#7a7a7a"/><circle cx="11" cy="11" r="5" fill="#cacaca" stroke="#7a7a7a"/><path d="M15 16l3-3h7v7l-3 3h-7zM15 16h7v7M22 16l3-3" fill="#78a4d2" stroke="#4a78a8"/></svg><svg width="6" height="4"><use href="#caret"/></svg></button>
                        <span class="nav-line"></span>
                        <button class="nav-tool" aria-label="Zoom region"><svg width="18" height="18"><path d="M1.500 2.500h11v10h-11z" fill="#8fb57e" stroke="#5a8a4a"/><circle cx="11" cy="11" r="3.500" fill="#ddd" stroke="#777"/><path d="M14 14l3 3" stroke="#777" stroke-width="2"/></svg><svg width="6" height="4"><use href="#caret"/></svg></button>
                        <button class="nav-dot last" aria-label="Navigation options"><svg width="9" height="9"><circle cx="4.500" cy="4.500" r="4" fill="#777"/><path d="M2.500 3.500h4M3 5h3L4.500 7z" stroke="#ddd" fill="#ddd" stroke-width=".7"/></svg></button>
                    </div>
                </div>
                <div class="scroll-v">
                    <button aria-label="Scroll up"><svg width="10" height="7"><path d="M1 6l4-4 4 4" fill="none" stroke="#555" stroke-width="2"/></svg></button>
                    <span class="thumb"></span>
                    <button aria-label="Scroll down"><svg width="10" height="7"><path d="M1 1l4 4 4-4" fill="none" stroke="#555" stroke-width="2"/></svg></button>
                </div>
            </div>

            <div class="view-bar">
                <button class="scale">1 : 20</button>
                <button aria-label="Detail level"><svg width="17" height="14"><path d="M1 2h15v10H1z" fill="#fff" stroke="#333d4a" stroke-width="1.500"/><path d="M2 3h4v3H2zM10 3h4v3h-4zM6 6h4v3H6zM2 9h4v2H2zM10 9h4v2h-4z" fill="#6a7078"/></svg></button>
                <button aria-label="Visual style"><svg width="16" height="14"><path d="M1.500 5.500l4-4h9v6l-4 5h-9zM1.500 5.500h9v7M10.500 5.500l4-4" fill="#fff" stroke="#333"/></svg></button>
                <button aria-label="Crop view"><svg width="16" height="14"><path d="M0 9.500h3M4.500 13V5.500H7V2h8M7.500 12V5h7" fill="none" stroke="#1d66ac" stroke-width="1.500"/><path d="M9 6l6 7M15 6l-6 7" stroke="#c8202c" stroke-width="2"/></svg></button>
                <button aria-label="Show crop region"><svg width="16" height="14"><path d="M0 9.500h3M4.500 13V3.500H9M7.500 12V5h3M7 9.500h4" fill="none" stroke="#1d66ac" stroke-width="1.500"/><circle cx="13" cy="4.500" r="2.500" fill="#dcecfa" stroke="#4a80c0"/><path d="M12 8h2v5h-2z" fill="#4a80c0"/></svg></button>
                <button aria-label="Lock 3D view"><svg width="16" height="16" viewBox="0 0 16 16"><path d="M2 6l6-5 6 4v4M2 6v6l5 3V7M1 7l6-6" fill="#e8eaee" stroke="#444"/><path d="M8.500 9.500h6v5h-6z" fill="#7fb0a8" stroke="#2c5a54"/><path d="M10 9V7c0-2 3-2 3 0v2" fill="none" stroke="#2c5a54"/></svg></button>
                <button aria-label="Temporary hide"><svg width="16" height="12"><path d="M0 3l4 2M15 1v4" stroke="#444"/><circle cx="5.500" cy="7.500" r="2.500" fill="#fff" stroke="#3a5a74" stroke-width="1.300"/><circle cx="12" cy="6.500" r="2.500" fill="#fff" stroke="#3a5a74" stroke-width="1.300"/><path d="M8 7l2-1" stroke="#444"/></svg></button>
                <button aria-label="Reveal constraints"><svg width="17" height="14"><path d="M1.500 0v13M15.500 0v5M1 3.500h15M4 1L1 3.500 4 6M13 1l3 2.500L13 6" fill="none" stroke="#444"/><path d="M2 12.500h8" stroke="#444" stroke-dasharray="2 1"/><path d="M10 8h6v5h-6z" fill="#555"/><path d="M11.500 8V6.500c0-1.500 3-1.500 3 0V8" fill="none" stroke="#555"/></svg></button>
                <button aria-label="Preview visibility"><svg width="16" height="14"><path d="M10 2H.500v7H10M0 12.500h15" fill="none" stroke="#333d4a" stroke-width="1.300"/><circle cx="12.500" cy="4.500" r="2.500" fill="#dcecfa" stroke="#4a80c0"/><path d="M11.500 8h2v3h-2z" fill="#8aa"/></svg></button>
                <button aria-label="Scroll left"><svg width="7" height="10"><path d="M6 1L2 5l4 4" fill="none" stroke="#444" stroke-width="2"/></svg></button>
                <div class="scroll-h"><span class="thumb"></span></div>
                <button aria-label="Scroll right"><svg width="7" height="10"><path d="M1 1l4 4-4 4" fill="none" stroke="#444" stroke-width="2"/></svg></button>
                <svg class="grip" width="12" height="12"><path d="M8 1h2v2H8zM4 5h2v2H4zM8 5h2v2H8zM0 9h2v2H0zM4 9h2v2H4zM8 9h2v2H8z" fill="#bbb"/></svg>
            </div>
        </section>

        <!-- Properties palette -->
        <aside class="properties">
            <div class="palette-head"><h2>Properties</h2><button aria-label="Close palette"><svg width="10" height="10" viewBox="0 0 12 12"><use href="#cross"/></svg></button></div>
            <button class="type-selector">
                <span class="preview"></span>
                <span class="type-name">LKA_WFC_TROUGH_N<br>Solid</span>
                <svg width="8" height="5" viewBox="0 0 6 4"><use href="#caret"/></svg>
            </button>
            <div class="filter-row">
                <div class="select-wrap filter-select">
                    <select aria-label="Element filter"><option>Generic Models (1)</option></select>
                    <svg width="10" height="6"><use href="#chev"/></svg>
                </div>
                <button class="edit-type"><svg width="17" height="16"><path d="M1 3l2-2h5v5L6 8H1zM9 3l2-2h5v6M1 10l2-2h5M1 10v5h6" fill="#fff" stroke="#333d4a"/><path d="M9.500 6.500h7v9h-7z" fill="#fff" stroke="#333d4a"/><path d="M11 8h3v3h-3z" fill="#1d66ac"/><path d="M11 13.500h4" stroke="#333"/></svg>Edit Type</button>
            </div>

            <div class="grid-scroll">
                <table class="params">
                    <colgroup><col class="c-name"><col><col class="c-assoc"></colgroup>
                    <tbody>
                        <tr class="group"><th colspan="3">Graphics<svg width="8" height="10"><use href="#fold"/></svg></th></tr>
                        <tr><td>Visibility/Graphics Overrides</td><td><button class="edit">Edit...</button></td><td></td></tr>
                        <tr><td><label for="visible">Visible</label></td><td><input id="visible" type="checkbox" checked></td><td><button class="assoc" aria-label="Associate Visible"></button></td></tr>
                    </tbody>
                    <tbody>
                        <tr class="group"><th colspan="3">Dimensions<svg width="8" height="10"><use href="#fold"/></svg></th></tr>
                        <tr><td><label for="width">Width</label></td><td><input id="width" type="text" value="4.0000"></td><td><button class="assoc" aria-label="Associate Width"></button></td></tr>
                        <tr><td><label for="height">Height</label></td><td><input id="height" type="text" value="0.4000"></td><td><button class="assoc" aria-label="Associate Height"></button></td></tr>
                        <tr class="marked"><td><label for="height1">Height-1</label></td><td><input id="height1" type="text" value="1.5000"></td><td><button class="assoc" aria-label="Associate Height-1"></button></td></tr>
                        <tr><td><label for="wall">Wall Thk.</label></td><td><input id="wall" type="text" value="0.4000"></td><td><button class="assoc" aria-label="Associate Wall Thk."></button></td></tr>
                        <tr><td><label for="top">Top Slab Thk.</label></td><td><input id="top" type="text" value="0.2000"></td><td><button class="assoc" aria-label="Associate Top Slab Thk."></button></td></tr>
                        <tr><td><label for="bottom">Bott. Slab Thk.</label></td><td><input id="bottom" type="text" value="0.3500"></td><td><button class="assoc" aria-label="Associate Bott. Slab Thk."></button></td></tr>
                        <tr><td><label for="wings">Wings</label></td><td><input id="wings" type="text" value="0.4500"></td><td><button class="assoc" aria-label="Associate Wings"></button></td></tr>
                        <tr><td><label for="rotation">RotationZ</label></td><td><input id="rotation" type="text" value="20.00°"></td><td><button class="assoc" aria-label="Associate RotationZ"></button></td></tr>
                        <tr class="dim"><td>Volume</td><td></td><td></td></tr>
                    </tbody>
                    <tbody>
                        <tr class="group"><th colspan="3">Identity Data<svg width="8" height="10"><use href="#fold"/></svg></th></tr>
                        <tr><td><label for="image">Image</label></td><td><input id="image" type="text"></td><td><button class="assoc" aria-label="Associate Image"></button></td></tr>
                        <tr><td><label for="comments">Comments</label></td><td><input id="comments" type="text"></td><td><button class="assoc" aria-label="Associate Comments"></button></td></tr>
                        <tr><td><label for="mark">Mark</label></td><td><input id="mark" type="text"></td><td><button class="assoc" aria-label="Associate Mark"></button></td></tr>
                    </tbody>
                    <tbody>
                        <tr class="group"><th colspan="3">Adaptive Component<svg width="8" height="10"><use href="#fold"/></svg></th></tr>
                        <tr><td><label for="flip">Flip</label></td><td><input id="flip" type="checkbox"></td><td><button class="assoc" aria-label="Associate Flip"></button></td></tr>
                    </tbody>
                    <tbody>
                        <tr class="group"><th colspan="3">Other<svg width="8" height="10"><use href="#fold"/></svg></th></tr>
                        <tr><td><label for="label">Label</label></td><td><input id="label" type="text" value="&lt;None&gt;"></td><td></td></tr>
                    </tbody>
                </table>
            </div>

            <div class="palette-foot"><a href="#">Properties help</a><button class="apply" disabled>Apply</button></div>
        </aside>
    </main>

    <!-- Status bar -->
    <footer class="status">
        <span class="prompt">Click to select, TAB for alternates, CTRL adds, SHIFT unselects.</span>
        <div class="status-tools">
            <button aria-label="Select links"><svg width="18" height="17"><path d="M1 5c0-4 6-4 8-1 2-3 8-3 8 1s-6 4-8 1C7 9 1 9 1 5z" fill="#f0c94a" stroke="#9a7612"/><path d="M4 5h3M11 5h3" stroke="#9a7612"/><path d="M8 5v10l2.500-2.500L12 16l1.500-.700-1.500-3.500h3z" fill="#fff" stroke="#222"/></svg></button>
            <button aria-label="Select underlay elements"><svg width="18" height="17"><path d="M1 12l8-9v9zM1 9h8" fill="#c4e2f8" stroke="#1d66ac"/><path d="M10 1l6 6M16 1l-6 6" stroke="#c8202c" stroke-width="2"/><path d="M9 6v9l2.500-2.500L13 16l1.500-.700-1.500-3.500h3z" fill="#fff" stroke="#222"/></svg></button>
            <button aria-label="Select pinned elements"><svg width="18" height="17"><path d="M2 1.500h9v2H9.500v4l2.500 2v1.500H1V9.500l2.500-2v-4H2z" fill="#f29a5c" stroke="#b04a14"/><path d="M6 11v5" stroke="#a33"/><path d="M9 6v9l2.500-2.500L13 16l1.500-.700-1.500-3.500h3z" fill="#fff" stroke="#222"/></svg></button>
            <button aria-label="Select elements by face"><svg width="18" height="17"><path d="M2 4l7-3v12l-7 2z" fill="#a4d4f6" stroke="#1d66ac"/><path d="M9 6v9l2.500-2.500L13 16l1.500-.700-1.500-3.500h3z" fill="#fff" stroke="#222"/></svg></button>
            <button aria-label="Drag elements on selection"><svg width="18" height="17"><path d="M1 6h9M5.500 1.500v9M3.500 3l2-2 2 2M3.500 9l2 2 2-2M3 4L1 6l2 2" fill="none" stroke="#111" stroke-width="1.300"/><path d="M9 6v9l2.500-2.500L13 16l1.500-.700-1.500-3.500h3z" fill="#fff" stroke="#222"/></svg></button>
            <button aria-label="Background processes"><svg width="16" height="16"><circle cx="8" cy="8" r="5" fill="none" stroke="#9c9c9c" stroke-width="3" stroke-dasharray="3 1"/></svg></button>
            <button class="filter" aria-label="Filter"><svg width="17" height="16"><path d="M1 1.500h15l-6 7v6l-3-2v-4z" fill="#b8c4d0" stroke="#3c4650"/></svg>:1</button>
        </div>
    </footer>

</body>
</html>
```

FILE: styles.css
```css
/* General reset */
* {
    margin: 0;
    padding: 0;
    box-sizing: border-box;
}

body {
    display: flex;
    flex-direction: column;
    height: 100vh;
    overflow: hidden;
    background: #cbcbcb;
    color: #333;
    font-family: "Segoe UI", "Open Sans", "Noto Sans", sans-serif;
    font-size: 12px;
    line-height: 16px;
}

button, input, select {
    font: inherit;
    color: inherit;
    background: none;
    border: 0;
    border-radius: 0;
    white-space: nowrap;
}

svg {
    display: block;
    flex: none;
}

.defs {
    position: absolute;
}

/* Title bar */
.titlebar {
    display: flex;
    height: 29px;
    padding-left: 1px;
}

.quick-access, .info-center {
    display: flex;
    align-items: center;
    height: 24px;
}

.icon-btn {
    display: flex;
    align-items: center;
    justify-content: center;
    width: 24px;
    height: 22px;
}

.caret-btn {
    display: flex;
    align-items: center;
    justify-content: center;
    width: 12px;
    height: 22px;
}

.caret-btn.customize {
    width: 14px;
}

.spaced {
    margin-left: 4px;
}

.pressed {
    background: #a9d1f5;
    border: 1px solid #1f66b0;
}

.text-tool {
    color: #808080;
    font-size: 19px;
    font-weight: 700;
}

.divider {
    width: 1px;
    height: 20px;
    margin: 0 3px;
    background: #b5b5b5;
}

.info-center .divider {
    margin: 0 6px;
}

.window-title {
    flex: 1;
    font-size: 12px;
    font-weight: 400;
    line-height: 20px;
    text-align: center;
}

.search {
    width: 180px;
    height: 22px;
    padding: 0 3px;
    background: #fff;
    border: 1px solid #111;
}

.search::placeholder {
    color: #666;
    font-size: 11px;
    font-style: italic;
}

.user-btn {
    display: flex;
    align-items: center;
    justify-content: space-between;
    width: 97px;
    padding-right: 3px;
}

.help-mark {
    width: 17px;
    height: 17px;
    border: 1px solid #1b2c5c;
    border-radius: 50%;
    background: #fff;
    color: #2247b0;
    font-size: 13px;
    font-weight: 700;
    line-height: 15px;
}

.window-buttons {
    display: flex;
    margin-left: 8px;
}

/* Ribbon tabs */
.tabs {
    display: flex;
    height: 20px;
}

.tab {
    padding: 0 9px;
}

.tab.file {
    width: 45px;
    margin-right: 2px;
    background: #2078b4;
    color: #fff;
}

.tab.active {
    padding: 0 6px;
    background: #e4eed6;
}

.tab.cycle {
    padding: 0 20px;
}

/* Ribbon */
.ribbon {
    display: flex;
    height: 96px;
    background: #e4eed6;
    border-bottom: 1px solid #c3c3c3;
}

.panel {
    display: flex;
    flex: none;
    flex-direction: column;
    background: #eee;
    border-right: 1px solid #e9ecdf;
}

.panel-body {
    display: flex;
    flex: 1;
    min-height: 0;
}

.panel-title {
    display: flex;
    align-items: center;
    justify-content: center;
    gap: 6px;
    height: 19px;
    padding-bottom: 2px;
}

.panel.context .panel-title {
    background: #e4eed6;
}

.panel.family .panel-title {
    margin: 0 1px 1px;
    height: 18px;
    background: #c5c5e1;
}

.w-select { width: 57px; }
.w-properties { width: 83px; }
.w-draw { width: 253px; }
.w-workplane { width: 109px; }
.w-clipboard { width: 80px; }
.w-geometry { width: 107px; }
.w-modify { width: 172px; }
.w-measure { width: 58px; }
.w-mode { width: 49px; }
.w-form { width: 60px; }
.w-visibility { width: 57px; }
.w-host { width: 62px; }
.w-family { width: 158px; }

.tool {
    display: flex;
    align-items: center;
    justify-content: center;
}

.tool.on {
    background: #a9d1f5;
    border: 1px solid #1f66b0;
}

.tool.pair {
    gap: 7px;
}

.big-btn {
    position: relative;
    display: flex;
    flex: auto;
    flex-direction: column;
    align-items: center;
    padding-top: 5px;
    line-height: 15px;
}

.big-btn span {
    margin-top: 4px;
}

.big-btn.narrow {
    flex: none;
    width: 42px;
}

.big-btn .corner {
    position: absolute;
    right: 5px;
    bottom: 17px;
}

.disabled {
    color: #a3a3a3;
}

.modify-btn {
    margin: 3px 6px 1px 7px;
    padding-top: 9px;
    background: linear-gradient(#cfe5f8, #a4cdf2);
    border: 1px solid #1f66b0;
}

.modify-btn span {
    margin-top: 6px;
}

.prop-grid {
    display: grid;
    grid-template-columns: 38px 38px;
    grid-template-rows: 34px 34px;
    gap: 2px 0;
    padding: 4px 3px;
}

.tool-list {
    display: grid;
    grid-auto-rows: 24px;
    padding: 3px 0 0 6px;
}

.tool-list.middle {
    padding-top: 16px;
}

.row-btn {
    display: flex;
    align-items: center;
    gap: 3px;
}

.more-caret {
    margin-left: 4px;
}

.w-draw .tool-list {
    width: 85px;
}

.draw-box {
    display: flex;
    width: 126px;
    height: 68px;
    margin: 5px 0 0;
    border: 1px solid #c2c2c2;
}

.draw-grid {
    display: grid;
    flex: 1;
    grid-template-columns: repeat(5, 22px);
    grid-template-rows: repeat(3, 22px);
}

.draw-scroll {
    display: grid;
    grid-template-rows: 26px 26px 14px;
    width: 14px;
    border-left: 1px solid #c2c2c2;
}

.draw-scroll button {
    display: flex;
    align-items: center;
    justify-content: center;
    border-bottom: 1px solid #c2c2c2;
}

.surface-tools, .tool-stack {
    display: grid;
    grid-template-rows: 36px 36px;
    align-content: start;
    padding: 2px 4px 0;
}

.w-workplane .tool-list, .w-clipboard .tool-list {
    padding-left: 3px;
}

.w-clipboard .big-btn {
    width: 54px;
}

.w-geometry .tool-list + .tool-list {
    justify-items: start;
    padding-left: 10px;
}

.modify-grid {
    display: grid;
    grid-template-columns: repeat(5, 25px);
    grid-template-rows: repeat(3, 24px);
    padding: 3px 0 0 5px;
}

.w-modify .tool-stack {
    padding: 3px 2px 0 6px;
}

.w-measure .tool-stack {
    padding: 4px 4px 0 5px;
}

/* Options bar */
.options-bar {
    display: flex;
    align-items: center;
    height: 26px;
    background: #eee;
    color: #111;
}

.mode-name {
    width: 166px;
    padding-left: 8px;
}

.bar {
    width: 1px;
    height: 22px;
    background: #8c8c8c;
}

.check {
    display: flex;
    align-items: center;
    gap: 4px;
    width: 194px;
    padding-left: 9px;
    white-space: nowrap;
}

.check.off {
    width: 137px;
    padding-left: 7px;
    color: #8a8a8a;
}

input[type="checkbox"] {
    appearance: none;
    position: relative;
    flex: none;
    width: 13px;
    height: 13px;
    background: #fff;
    border: 1px solid #333;
}

input[type="checkbox"]:disabled {
    border-color: #c8c8c8;
}

input[type="checkbox"]:checked::before {
    content: "";
    position: absolute;
    top: 1px;
    left: 3px;
    width: 4px;
    height: 7px;
    border: solid #222;
    border-width: 0 1px 1px 0;
    transform: rotate(40deg);
}

.label-field {
    width: 47px;
    padding-left: 12px;
}

.select-wrap {
    position: relative;
    background: #e1e1e1;
    border: 1px solid #c2c2c2;
}

.select-wrap select {
    appearance: none;
    display: block;
    width: 100%;
    height: 100%;
    padding: 0 24px 0 4px;
}

.select-wrap svg {
    position: absolute;
    top: 8px;
    right: 4px;
    pointer-events: none;
}

.label-select {
    width: 113px;
    height: 22px;
}

.activate {
    height: 22px;
    margin-left: 8px;
    padding: 0 3px;
    background: #f8f8f8;
    border: 1px solid #8c8c8c;
}

/* Workspace */
.workspace {
    display: flex;
    flex: 1;
    min-height: 0;
}

.view {
    display: flex;
    flex: 1;
    flex-direction: column;
    min-width: 0;
    padding-left: 1px;
    background: #cbcbcb;
}

.view-tabs {
    display: flex;
    height: 24px;
    padding-top: 2px;
    border-bottom: 2px solid #fff;
}

.view-tab {
    display: flex;
    align-items: center;
    gap: 8px;
    width: 126px;
    padding-left: 2px;
}

.view-tab.current {
    width: 128px;
    padding-left: 5px;
    background: #fff;
}

.view-tab b {
    font-weight: 600;
}

.close-tab {
    margin: 0 5px 0 auto;
}

.view-menu {
    margin: 0 4px 0 auto;
}

.view-row {
    display: flex;
    flex: 1;
    min-height: 0;
}

.canvas {
    position: relative;
    flex: 1;
    min-width: 0;
    background: linear-gradient(#808080, #bfbfbf);
}

.model {
    position: absolute;
    inset: 0;
    width: 100%;
    height: 100%;
}

.ref-plane {
    fill: none;
    stroke: #1f7d24;
    stroke-dasharray: 12 8;
}

.profile {
    fill: none;
    stroke: #1233b0;
}

.grips {
    fill: #4468b4;
    stroke: #263f78;
    stroke-width: 1px;
}

.markup {
    fill: none;
    stroke: #f01616;
    stroke-width: 2px;
    stroke-linecap: round;
    stroke-linejoin: round;
}

.point-label {
    fill: #555;
    font-size: 10px;
    text-anchor: middle;
}

.cube-label {
    fill: #626870;
    font-size: 9px;
    font-weight: 700;
}

/* Navigation bar floats over the canvas */
.nav-bar {
    position: absolute;
    top: 120px;
    right: 1px;
    display: flex;
    flex-direction: column;
    align-items: center;
    width: 35px;
    height: 117px;
    padding: 2px 3px;
    background: rgba(190, 190, 190, 0.7);
    border: 2px solid #6e6e6e;
    border-radius: 5px;
}

.nav-dot {
    align-self: flex-end;
}

.nav-dot.last {
    margin-top: auto;
}

.nav-tool {
    display: flex;
    flex-direction: column;
    align-items: center;
    gap: 6px;
    padding: 6px 0 3px;
}

.nav-line {
    width: 100%;
    height: 1px;
    background: #75806c;
}

.scroll-v {
    display: flex;
    flex-direction: column;
    align-items: center;
    justify-content: space-between;
    width: 17px;
    padding: 5px 0;
    background: #f0f0f0;
    border-right: 1px solid #fff;
}

.thumb {
    width: 15px;
    height: 17px;
    background: #cdcdcd;
}

.view-bar {
    display: flex;
    align-items: center;
    height: 19px;
    padding-bottom: 2px;
    background: #f0f0f0;
    border-bottom: 2px solid #fff;
}

.view-bar button {
    display: flex;
    align-items: center;
    justify-content: center;
    width: 21px;
}

.view-bar .scale {
    width: 77px;
    padding-left: 5px;
    font-size: 11px;
}

.scroll-h {
    display: flex;
    flex: 1;
    justify-content: center;
}

.scroll-h .thumb {
    height: 15px;
}

.grip {
    margin: 0 1px;
}

/* Properties palette */
.properties {
    display: flex;
    flex: none;
    flex-direction: column;
    width: 349px;
    margin-top: 2px;
    background: #eee;
    border-left: 4px solid #cbcbcb;
}

.palette-head {
    display: flex;
    align-items: center;
    justify-content: space-between;
    height: 20px;
    padding-left: 3px;
}

.palette-head h2 {
    font-size: 12px;
    font-weight: 400;
}

.type-selector {
    display: flex;
    align-items: center;
    height: 72px;
    margin-left: 1px;
    padding-left: 3px;
    border: 1px solid #d2d2d2;
    border-right: 0;
    text-align: left;
    color: #555;
}

.preview {
    width: 66px;
    height: 66px;
    margin-right: 4px;
    border: 1px solid #c9c9c9;
}

.type-name {
    flex: 1;
}

.filter-row {
    display: flex;
    align-items: center;
    height: 25px;
    padding-left: 2px;
}

.filter-select {
    flex: 1;
    height: 23px;
    border-color: #aaa;
    color: #222;
}

.edit-type {
    display: flex;
    align-items: center;
    gap: 3px;
    width: 79px;
    padding-left: 5px;
    color: #222;
}

.grid-scroll {
    flex: 1;
    margin-left: 2px;
    background: #fff;
}

.params {
    width: 100%;
    border-collapse: separate;
    border-spacing: 0;
    table-layout: fixed;
    color: #111;
}

.c-name {
    width: 168px;
}

.c-assoc {
    width: 9px;
}

.params th {
    position: relative;
    height: 18px;
    padding-left: 2px;
    background: #dadada;
    font-weight: 400;
    line-height: 16px;
    text-align: left;
    vertical-align: top;
}

.params th svg {
    position: absolute;
    top: 4px;
    right: 3px;
}

.params td {
    position: relative;
    height: 18px;
    border-right: 1px dotted #777;
    border-bottom: 1px dotted #777;
    line-height: 16px;
    vertical-align: top;
}

.params td:first-child {
    padding-left: 8px;
    white-space: nowrap;
}

.params td:last-child {
    border-right: 0;
}

.params input[type="text"] {
    display: block;
    width: 100%;
    height: 16px;
    padding-left: 2px;
}

.params input[type="checkbox"] {
    display: block;
    margin: 3px 0 0 3px;
}

.params .edit {
    display: block;
    width: 163px;
    height: 16px;
    margin: 1px 0 0 1px;
    background: #e1e1e1;
    border: 1px solid #aaa;
    line-height: 14px;
}

.params .assoc {
    display: block;
    width: 8px;
    height: 15px;
    margin: 1px 0 0 1px;
    background: #e1e1e1;
    border: 1px solid #aaa;
    border-right: 0;
}

.dim {
    color: #888;
}

/* Highlighter stroke over the Height-1 row */
.marked td:first-child::after {
    content: "";
    position: absolute;
    z-index: 1;
    top: 0;
    left: -7px;
    width: 219px;
    height: 17px;
    background: #ff0;
    mix-blend-mode: multiply;
    pointer-events: none;
}

.palette-foot {
    display: flex;
    justify-content: space-between;
    height: 28px;
    padding: 3px 0 4px 4px;
}

.palette-foot a {
    line-height: 18px;
    color: #1560c8;
}

.apply {
    width: 72px;
    background: #cdcdcd;
    border: 1px solid #bfbfbf;
    color: #909090;
}

/* Status bar */
.status {
    display: flex;
    align-items: center;
    justify-content: space-between;
    height: 25px;
    padding: 0 66px 0 1px;
    border-bottom: 1px solid #111;
    color: #111;
}

.status-tools {
    display: flex;
}

.status-tools button {
    display: flex;
    align-items: center;
    justify-content: center;
    width: 26px;
}

.status-tools .filter {
    width: 34px;
}
```
